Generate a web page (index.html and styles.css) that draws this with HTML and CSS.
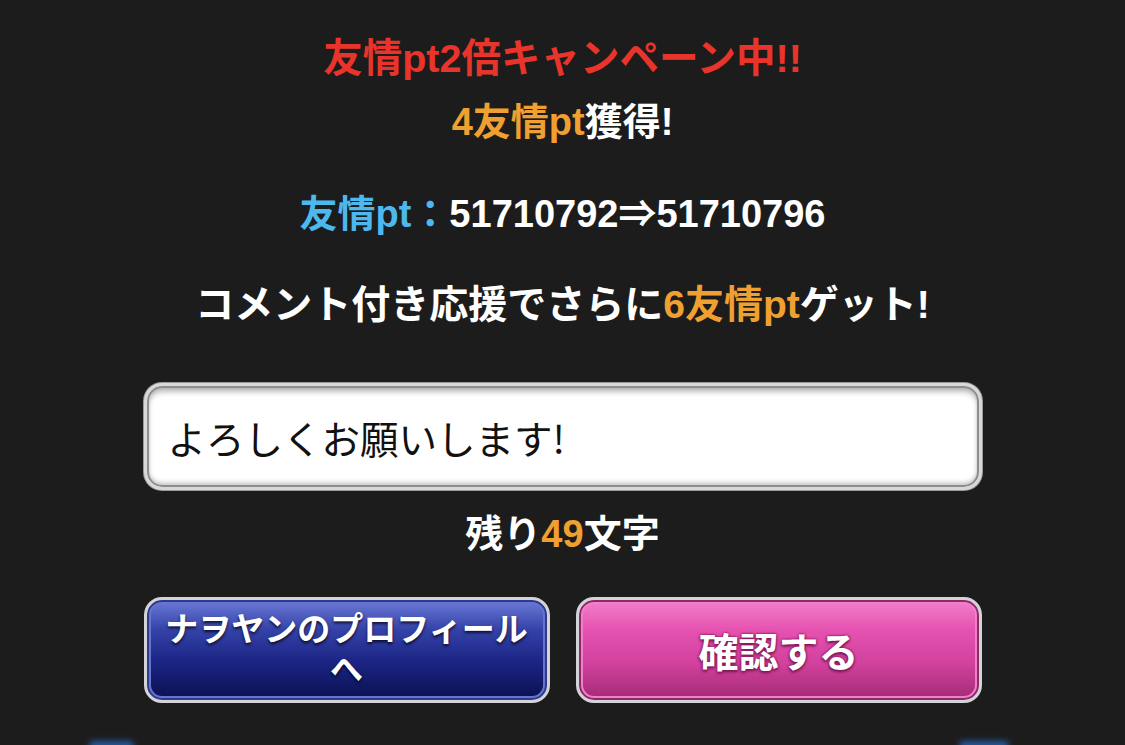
FILE: index.html
```html
<!DOCTYPE html>
<html lang="ja">
<head>
<meta charset="utf-8">
<link rel="stylesheet" href="styles.css">
</head>
<body>
<main class="panel">
  <p class="line title">友情pt2倍キャンペーン中!!</p>
  <p class="line gain"><span class="orange">4友情pt</span>獲得!</p>
  <p class="line points"><span class="blue">友情pt：</span>51710792⇒51710796</p>
  <p class="line extra">コメント付き応援でさらに<span class="orange">6友情pt</span>ゲット!</p>
  <div class="comment">よろしくお願いします!</div>
  <p class="line remain">残り<span class="orange">49</span>文字</p>
  <div class="actions">
    <button class="btn btn-blue"><span>ナヲヤンのプロフィール<br>へ</span></button>
    <button class="btn btn-pink"><span>確認する</span></button>
  </div>
  <div class="peek">
    <span class="glow glow-left"></span>
    <span class="glow glow-right"></span>
  </div>
</main>
</body>
</html>
```

FILE: styles.css
```css
html, body {
  margin: 0;
  padding: 0;
  background: #1c1c1c;
  height: 100%;
  overflow: hidden;
}

body {
  font-family: "Liberation Sans", "Noto Sans CJK JP", sans-serif;
  color: #ffffff;
}

.panel {
  width: 838px;
  margin: 0 auto;
  padding-top: 26px;
  display: flex;
  flex-direction: column;
  align-items: stretch;
}

.line {
  margin: 0;
  text-align: center;
  font-weight: bold;
  font-size: 38px;
  line-height: 64px;
  white-space: nowrap;
}

.title {
  color: #e8342a;
  font-size: 39.5px;
}

.points {
  margin-top: 28px;
}

.extra {
  margin-top: 27px;
  font-size: 39px;
}

.orange {
  color: #f0a030;
}

.blue {
  color: #4cb8ee;
}

.comment {
  margin-top: 46px;
  height: 107px;
  box-sizing: border-box;
  border-radius: 18px;
  background: #ffffff;
  border: 3px solid #d8d8d8;
  box-shadow:
    0 0 0 1px #9a9a9a,
    inset 0 0 0 2px #8e8e8e,
    inset 0 5px 6px rgba(0, 0, 0, 0.35),
    inset 0 -4px 5px rgba(0, 0, 0, 0.25);
  display: flex;
  align-items: center;
  padding-left: 21px;
  font-family: "Noto Sans CJK JP", sans-serif;
  font-weight: normal;
  font-size: 38.5px;
  color: #111111;
}

.remain {
  margin-top: 12px;
}

.actions {
  margin-top: 31px;
  display: grid;
  grid-template-columns: 1fr 1fr;
  gap: 26px;
}

.btn {
  height: 106px;
  border-radius: 18px;
  border: 3px solid #d4d4d8;
  padding: 0;
  font-family: "Liberation Sans", "Noto Sans CJK JP", sans-serif;
  font-weight: bold;
  color: #ffffff;
  display: flex;
  align-items: center;
  justify-content: center;
  text-align: center;
}

.btn-blue {
  background: linear-gradient(#6c7ad8 0%, #3442a8 30%, #1c2686 60%, #0a1050 100%);
  box-shadow:
    inset 0 0 0 2px #2e3a90,
    inset 0 0 0 4px #6674cc;
  font-size: 33px;
  line-height: 40px;
  text-shadow: 0 2px 3px rgba(0, 0, 20, 0.8);
}

.btn-pink {
  background: linear-gradient(#f27fcc 0%, #e652b0 30%, #d0409c 65%, #a22a74 100%);
  box-shadow:
    inset 0 0 0 2px #8e2a68,
    inset 0 0 0 4px #ee80c8;
  font-size: 40px;
  text-shadow:
    0 0 3px #8a1c5c,
    0 2px 3px #7a1450,
    0 0 2px #8a1c5c;
}

.peek {
  position: relative;
  height: 40px;
}

.glow {
  position: absolute;
  top: 38px;
  height: 10px;
  border-radius: 5px;
  background: #2a6cc0;
  opacity: 0.8;
  filter: blur(3px);
}

.glow-left {
  left: -55px;
  width: 45px;
}

.glow-right {
  left: 815px;
  width: 50px;
}
```
